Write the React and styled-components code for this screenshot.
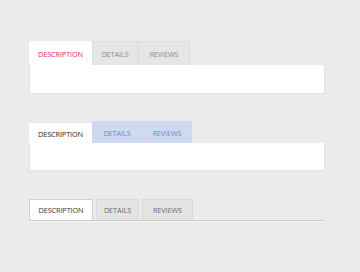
import styled, { createGlobalStyle } from "styled-components";

const Global = createGlobalStyle`
  body {
    margin: 0;
    background: #ebebeb;
    font-family: "Open Sans", "Liberation Sans", sans-serif;
  }
`;

const Page = styled.div`
  width: 360px;
  height: 272px;
  padding: 41px 35px 0 29px;
  box-sizing: border-box;
  display: flex;
  flex-direction: column;
`;

const Block = styled.div`
  display: flex;
  flex-direction: column;
  margin-bottom: ${(p) => p.$gap || 0}px;
`;

const TabRow = styled.div`
  display: flex;
  align-items: flex-end;
  gap: ${(p) => p.$gap || 0}px;
`;

const Tab = styled.div`
  box-sizing: border-box;
  height: ${(p) => p.$h}px;
  width: ${(p) => p.$w}px;
  display: flex;
  align-items: center;
  justify-content: center;
  font-size: 7.3px;
  letter-spacing: -0.1px;
  text-transform: uppercase;
  color: ${(p) => p.$color};
  background: ${(p) => p.$bg};
  border: 1px solid ${(p) => p.$border};
  border-bottom: none;
`;

const Panel = styled.div`
  height: ${(p) => p.$h}px;
  background: #fff;
  border: 1px solid #e2e2e2;
  border-top: none;
`;

const Line = styled.div`
  height: 1px;
  background: #c8c8c8;
  box-shadow: 0 1px 0 #f6f6f6;
`;

const first = [
  { label: "Description", w: 63, h: 24, bg: "#fff", color: "#e8245a", border: "#fff" },
  { label: "Details", w: 46, h: 24, bg: "#e6e6e6", color: "#8a8a8a", border: "#dedede" },
  { label: "Reviews", w: 52, h: 24, bg: "#e6e6e6", color: "#8a8a8a", border: "#dedede" },
];

const second = [
  { label: "Description", w: 63, h: 20, bg: "#fff", color: "#222", border: "#fff" },
  { label: "Details", w: 50, h: 22, bg: "#cfd9f2", color: "#7a86a8", border: "#cfd9f2" },
  { label: "Reviews", w: 50, h: 22, bg: "#cfd9f2", color: "#7a86a8", border: "#cfd9f2" },
];

const third = [
  { label: "Description", w: 64, h: 21, bg: "#fff", color: "#333", border: "#cfcfcf" },
  { label: "Details", w: 43, h: 21, bg: "#e4e4e4", color: "#6a6a6a", border: "#dadada" },
  { label: "Reviews", w: 51, h: 21, bg: "#e4e4e4", color: "#6a6a6a", border: "#dadada" },
];

const Tabs = ({ items, gap }) => (
  <TabRow $gap={gap}>
    {items.map((t) => (
      <Tab key={t.label} $w={t.w} $h={t.h} $bg={t.bg} $color={t.color} $border={t.border}>
        {t.label}
      </Tab>
    ))}
  </TabRow>
);

export default function App() {
  return (
    <>
      <Global />
      <Page>
        <Block $gap={27}>
          <Tabs items={first} />
          <Panel $h={28} />
        </Block>
        <Block $gap={28}>
          <Tabs items={second} />
          <Panel $h={27} />
        </Block>
        <Block>
          <Tabs items={third} gap={3} />
          <Line />
        </Block>
      </Page>
    </>
  );
}
